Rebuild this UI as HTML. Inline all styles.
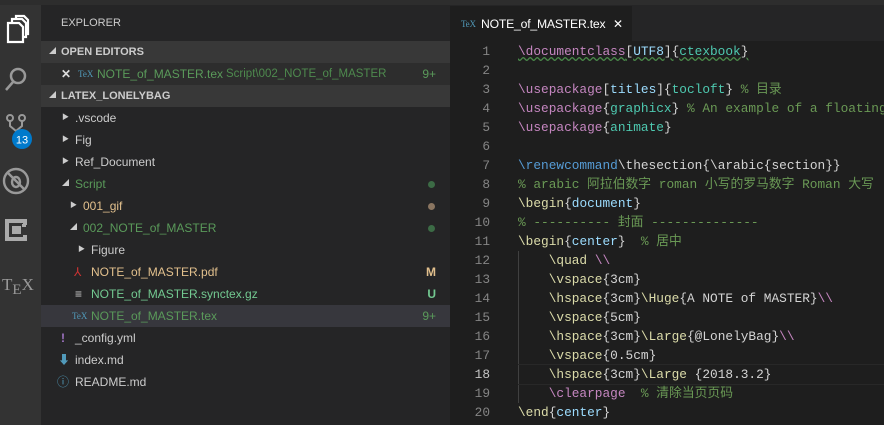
<!DOCTYPE html>
<html><head><meta charset="utf-8"><style>
*{margin:0;padding:0;box-sizing:border-box}
body{width:884px;height:425px;overflow:hidden;background:#1e1e1e;font-family:"Liberation Sans","Noto Sans CJK SC",sans-serif;position:relative}
#top{position:absolute;left:0;top:0;width:884px;height:5px;background:#2d2d2d}
#act{position:absolute;left:0;top:5px;width:41px;height:420px;background:#333333}
#side{position:absolute;left:41px;top:5px;width:409px;height:420px;background:#252526;color:#cccccc;font-size:12px}
#sin{position:absolute;left:0;top:1px;width:409px;height:419px}
.row{position:absolute;left:0;width:409px;height:22px;line-height:22px;white-space:nowrap}
.hdr{background:#383838;font-weight:bold;font-size:11px;color:#ccc}
.tri{position:absolute;font-size:7px;color:#ccc}
.g{color:#73c991}.gs{color:#5a9a5a}.y{color:#e2c08d}
.badge{position:absolute;right:14px;font-size:12px}
.dot{position:absolute;right:15px;top:8px;width:7px;height:7px;border-radius:50%}
#tabs{position:absolute;left:450px;top:5px;width:434px;height:36px;background:#252526}
#tab{position:absolute;left:0;top:1px;width:182px;height:35px;background:#1e1e1e;color:#fff;font-size:12.2px;line-height:36px;padding-left:31px;letter-spacing:-0.2px}
#code{position:absolute;left:450px;top:42px;font-family:"Liberation Mono","Noto Sans CJK SC",monospace;font-size:12.8px;color:#d4d4d4}
.l{position:absolute;left:0;height:19px;line-height:19px;white-space:pre}
.n{position:absolute;width:40px;text-align:right;color:#858585}
.c{position:absolute;left:68px}
.p{color:#c586c0}.b{color:#9cdcfe}.t{color:#4ec9b0}.cm{color:#6a9955}.k{color:#569cd6}.f{color:#dcdcaa}.br{color:#d4d4d4}
.tex{font-family:"Liberation Serif",serif;font-size:9px;color:#519aba}
</style></head><body>
<div id="top"></div>
<div id="act">
<svg width="41" height="300" viewBox="0 0 41 300" style="position:absolute;left:0;top:0">
<g fill="none" stroke="#fff" stroke-width="2.2"><path d="M8 18h11l4 4v15H8z"/><path d="M12 18v-4h10l4 4v14h-3"/><path d="M16 14v-3h8l4 4v14h-2"/></g>
<g fill="none" stroke="#999" stroke-width="2.5"><circle cx="18" cy="71" r="7"/><path d="M13 77l-7 8"/></g>
<g fill="none" stroke="#999" stroke-width="2"><circle cx="10" cy="113" r="3"/><circle cx="22" cy="113" r="3"/><path d="M10 116v5l6 5M22 116v5l-6 5"/></g>
<circle cx="22" cy="134" r="10" fill="#007acc"/><text x="22" y="138.5" font-size="11" fill="#fff" text-anchor="middle" font-family="Liberation Sans">13</text>
<g fill="none" stroke="#999" stroke-width="2.4"><circle cx="16" cy="176" r="12"/><path d="M8 168l16 16"/><ellipse cx="16" cy="177" rx="4" ry="5"/></g>
<g fill="#aaa"><path d="M5 214h22v6h-4v-2H9v14h14v-2h4v6H5z"/><rect x="12" y="221" width="9" height="8"/><rect x="22" y="219" width="4" height="3"/></g>
<text x="2" y="285" font-size="17" fill="#999" font-family="Liberation Serif">T<tspan dy="4" font-size="15">E</tspan><tspan dy="-4">X</tspan></text>
</svg>
</div>
<div id="side"><div id="sin">
<div class="row" style="top:0;height:35px;line-height:35px;padding-left:20px;font-size:11px">EXPLORER</div>
<div style="position:absolute;top:35px;left:0;width:409px;height:66px;background:#2d2d2d"></div>
<div class="row hdr" style="top:35px"><span class="tri" style="left:8px">◢</span><span style="position:absolute;left:20px">OPEN EDITORS</span></div>
<div class="row" style="top:57px"><span style="position:absolute;left:20px;font-weight:bold;color:#ddd">✕</span><span class="tex" style="position:absolute;left:37px">TeX</span><span class="gs" style="position:absolute;left:56px">NOTE_of_MASTER.tex</span><span style="position:absolute;left:185px;font-size:11.5px;color:#4e8a4e">Script\002_NOTE_of_MASTER</span><span class="badge gs">9+</span></div>
<div class="row hdr" style="top:79px"><span class="tri" style="left:8px">◢</span><span style="position:absolute;left:20px">LATEX_LONELYBAG</span></div>
<div class="row" style="top:101px"><span class="tri" style="left:21px">▶</span><span style="position:absolute;left:34px">.vscode</span></div>
<div class="row" style="top:123px"><span class="tri" style="left:21px">▶</span><span style="position:absolute;left:34px">Fig</span></div>
<div class="row" style="top:145px"><span class="tri" style="left:21px">▶</span><span style="position:absolute;left:34px">Ref_Document</span></div>
<div class="row" style="top:167px"><span class="tri" style="left:21px">◢</span><span class="gs" style="position:absolute;left:34px">Script</span><span class="dot" style="background:#3c6b45"></span></div>
<div class="row" style="top:189px"><span class="tri" style="left:29px">▶</span><span class="y" style="position:absolute;left:42px">001_gif</span><span class="dot" style="background:#8a7560"></span></div>
<div class="row" style="top:211px"><span class="tri" style="left:29px">◢</span><span class="gs" style="position:absolute;left:42px">002_NOTE_of_MASTER</span><span class="dot" style="background:#3c6b45"></span></div>
<div class="row" style="top:233px"><span class="tri" style="left:37px">▶</span><span style="position:absolute;left:50px">Figure</span></div>
<div class="row" style="top:255px"><span style="position:absolute;left:33px;color:#c33;font-size:12px">⅄</span><span class="y" style="position:absolute;left:50px">NOTE_of_MASTER.pdf</span><span class="badge y" style="font-weight:bold">M</span></div>
<div class="row" style="top:277px"><span style="position:absolute;left:34px;color:#ccc;font-size:12px">≡</span><span class="g" style="position:absolute;left:50px">NOTE_of_MASTER.synctex.gz</span><span class="badge g" style="font-weight:bold">U</span></div>
<div class="row" style="top:299px;background:#37373d"><span class="tex" style="position:absolute;left:31px">TeX</span><span class="gs" style="position:absolute;left:50px">NOTE_of_MASTER.tex</span><span class="badge gs">9+</span></div>
<div class="row" style="top:321px"><span style="position:absolute;left:20px;color:#a074c4;font-weight:bold">!</span><span style="position:absolute;left:34px">_config.yml</span></div>
<div class="row" style="top:343px"><span style="position:absolute;left:17px;color:#519aba">⬇</span><span style="position:absolute;left:34px">index.md</span></div>
<div class="row" style="top:365px"><span style="position:absolute;left:16px;color:#519aba;font-size:12px">ⓘ</span><span style="position:absolute;left:34px">README.md</span></div>
</div></div>
<div id="tabs"><div id="tab"><span class="tex" style="position:absolute;left:11px">TeX</span>NOTE_of_MASTER.tex <span style="position:absolute;left:163px;font-size:12px">✕</span></div></div>
<div id="code">
<div class="l" style="top:0"><span class="n">1</span><span class="c" style="text-decoration:underline wavy #4a8a4a"><span class="p">\documentclass</span><span class="br">[</span><span class="b">UTF8</span><span class="br">]{</span><span class="t">ctexbook</span><span class="br">}</span></span></div>
<div class="l" style="top:19px"><span class="n">2</span></div>
<div class="l" style="top:38px"><span class="n">3</span><span class="c"><span class="p">\usepackage</span><span class="br">[</span><span class="b">titles</span><span class="br">]{</span><span class="t">tocloft</span><span class="br">}</span> <span class="cm">% 目录</span></span></div>
<div class="l" style="top:57px"><span class="n">4</span><span class="c"><span class="p">\usepackage</span><span class="br">{</span><span class="t">graphicx</span><span class="br">}</span> <span class="cm">% An example of a floating</span></span></div>
<div class="l" style="top:76px"><span class="n">5</span><span class="c"><span class="p">\usepackage</span><span class="br">{</span><span class="t">animate</span><span class="br">}</span></span></div>
<div class="l" style="top:95px"><span class="n">6</span></div>
<div class="l" style="top:114px"><span class="n">7</span><span class="c"><span class="k">\renewcommand</span>\thesection<span class="br">{</span>\arabic<span class="br">{</span>section<span class="br">}}</span></span></div>
<div class="l" style="top:133px"><span class="n">8</span><span class="c cm">% arabic 阿拉伯数字 roman 小写的罗马数字 Roman 大写</span></div>
<div class="l" style="top:152px"><span class="n">9</span><span class="c"><span class="f">\begin</span><span class="br">{</span><span class="b">document</span><span class="br">}</span></span></div>
<div class="l" style="top:171px"><span class="n">10</span><span class="c cm">% ---------- 封面 --------------</span></div>
<div class="l" style="top:190px"><span class="n">11</span><span class="c"><span class="f">\begin</span><span class="br">{</span><span class="b">center</span><span class="br">}</span>  <span class="cm">% 居中</span></span></div>
<div style="position:absolute;left:68px;top:209px;width:1px;height:152px;background:#404040"></div>
<div class="l" style="top:209px"><span class="n">12</span><span class="c">    <span class="f">\quad</span> <span class="p">\\</span></span></div>
<div class="l" style="top:228px"><span class="n">13</span><span class="c">    <span class="f">\vspace</span><span class="br">{</span>3cm<span class="br">}</span></span></div>
<div class="l" style="top:247px"><span class="n">14</span><span class="c">    <span class="f">\hspace</span><span class="br">{</span>3cm<span class="br">}</span><span class="f">\Huge</span><span class="br">{</span>A NOTE of MASTER<span class="br">}</span><span class="p">\\</span></span></div>
<div class="l" style="top:266px"><span class="n">15</span><span class="c">    <span class="f">\vspace</span><span class="br">{</span>5cm<span class="br">}</span></span></div>
<div class="l" style="top:285px"><span class="n">16</span><span class="c">    <span class="f">\hspace</span><span class="br">{</span>3cm<span class="br">}</span><span class="f">\Large</span><span class="br">{</span>@LonelyBag<span class="br">}</span><span class="p">\\</span></span></div>
<div class="l" style="top:304px"><span class="n">17</span><span class="c">    <span class="f">\vspace</span><span class="br">{</span>0.5cm<span class="br">}</span></span></div>
<div style="position:absolute;left:68px;top:322px;width:370px;height:21px;border-top:1px solid #282828;border-bottom:1px solid #282828"></div>
<div class="l" style="top:323px"><span class="n" style="color:#c6c6c6">18</span><span class="c">    <span class="f">\hspace</span><span class="br">{</span>3cm<span class="br">}</span><span class="f">\Large</span> <span class="br">{</span>2018.3.2<span class="br">}</span></span></div>
<div class="l" style="top:342px"><span class="n">19</span><span class="c">    <span class="p">\clearpage</span>  <span class="cm">% 清除当页页码</span></span></div>
<div class="l" style="top:361px"><span class="n">20</span><span class="c"><span class="f">\end</span><span class="br">{</span><span class="b">center</span><span class="br">}</span></span></div>
</div>
</body></html>
